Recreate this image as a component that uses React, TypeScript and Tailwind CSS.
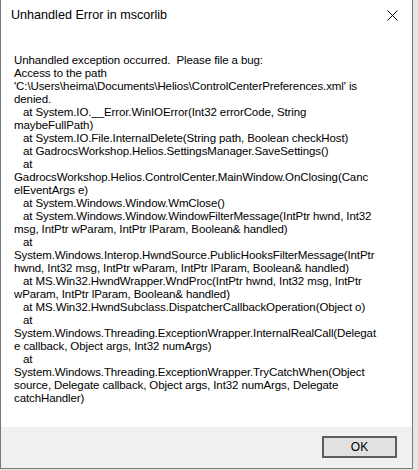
import React from 'react';

const lines: { text: string; indent?: boolean }[] = [
  { text: 'Unhandled exception occurred.  Please file a bug:' },
  { text: 'Access to the path' },
  { text: "'C:\\Users\\heima\\Documents\\Helios\\ControlCenterPreferences.xml' is" },
  { text: 'denied.' },
  { text: 'at System.IO.__Error.WinIOError(Int32 errorCode, String', indent: true },
  { text: 'maybeFullPath)' },
  { text: 'at System.IO.File.InternalDelete(String path, Boolean checkHost)', indent: true },
  { text: 'at GadrocsWorkshop.Helios.SettingsManager.SaveSettings()', indent: true },
  { text: 'at', indent: true },
  { text: 'GadrocsWorkshop.Helios.ControlCenter.MainWindow.OnClosing(Canc' },
  { text: 'elEventArgs e)' },
  { text: 'at System.Windows.Window.WmClose()', indent: true },
  { text: 'at System.Windows.Window.WindowFilterMessage(IntPtr hwnd, Int32', indent: true },
  { text: 'msg, IntPtr wParam, IntPtr lParam, Boolean& handled)' },
  { text: 'at', indent: true },
  { text: 'System.Windows.Interop.HwndSource.PublicHooksFilterMessage(IntPtr' },
  { text: 'hwnd, Int32 msg, IntPtr wParam, IntPtr lParam, Boolean& handled)' },
  { text: 'at MS.Win32.HwndWrapper.WndProc(IntPtr hwnd, Int32 msg, IntPtr', indent: true },
  { text: 'wParam, IntPtr lParam, Boolean& handled)' },
  { text: 'at MS.Win32.HwndSubclass.DispatcherCallbackOperation(Object o)', indent: true },
  { text: 'at', indent: true },
  { text: 'System.Windows.Threading.ExceptionWrapper.InternalRealCall(Delegat' },
  { text: 'e callback, Object args, Int32 numArgs)' },
  { text: 'at', indent: true },
  { text: 'System.Windows.Threading.ExceptionWrapper.TryCatchWhen(Object' },
  { text: 'source, Delegate callback, Object args, Int32 numArgs, Delegate' },
  { text: 'catchHandler)' },
];

export default function App() {
  return (
    <div className="w-[418px] h-[470px] bg-[#e6e6e6] font-['Liberation_Sans',sans-serif] text-black">
      <div className="w-[413px] h-[469px] flex flex-col border-x border-b border-[#777777] bg-white">
        {/* title bar */}
        <div className="h-[30px] flex items-center justify-between pl-[10px] pr-[14px] text-[12.6px]">
          <span>Unhandled Error in mscorlib</span>
          <svg width="11" height="11" viewBox="0 0 11 11">
            <path d="M0.5 0.5 L10.5 10.5 M10.5 0.5 L0.5 10.5" stroke="#000" strokeWidth="1" />
          </svg>
        </div>

        {/* message */}
        <div className="flex-1 pt-[24px] pl-[13px] leading-[13px] text-[11.5px] tracking-[-0.1px]">
          {lines.map((l, i) => (
            <div key={i} className={l.indent ? 'whitespace-pre pl-[9px]' : 'whitespace-pre'}>
              {l.text}
            </div>
          ))}
        </div>

        {/* footer */}
        <div className="h-[41px] bg-[#f0f0f0] flex justify-end items-start pt-[9px] pr-[15px]">
          <button className="w-[75px] h-[22px] border-2 border-[#5c5c5c] bg-[#e1e1e1] flex items-center justify-center text-[12px]">
            OK
          </button>
        </div>
      </div>
    </div>
  );
}
